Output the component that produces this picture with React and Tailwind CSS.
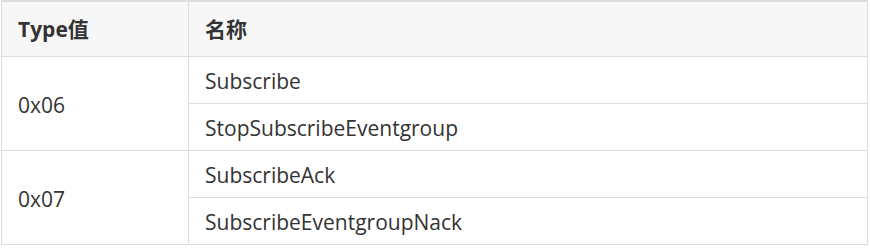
import React from "react";

const rows = [
	{ type: "0x06", names: ["Subscribe", "StopSubscribeEventgroup"] },
	{ type: "0x07", names: ["SubscribeAck", "SubscribeEventgroupNack"] }
];

export default function App() {
	return (
		<div className="bg-white w-[870px] h-[248px] pl-px">
			<table
				className="w-[867px] border-collapse text-[21px] leading-[28px] text-[#333]"
				style={{ fontFamily: '"Open Sans", "Noto Sans CJK SC", sans-serif' }}>
				<thead>
					<tr className="bg-[#f7f7f7] h-[55px]">
						<th className="w-[187px] border border-[#ddd] border-t-2 px-4 pt-px text-left font-bold">
							Type值
						</th>
						<th className="border border-[#ddd] border-t-2 px-4 pt-px text-left font-bold">
							名称
						</th>
					</tr>
				</thead>
				<tbody>
					{rows.map(row =>
						row.names.map((name, i) =>
							<tr key={name} className="h-[47px]">
								{i === 0 &&
									<td rowSpan={2} className="border border-[#ddd] px-4 pt-1">
										{row.type}
									</td>}
								<td className="border border-[#ddd] px-4 pt-0.5">
									{name}
								</td>
							</tr>
						)
					)}
				</tbody>
			</table>
		</div>
	);
}
